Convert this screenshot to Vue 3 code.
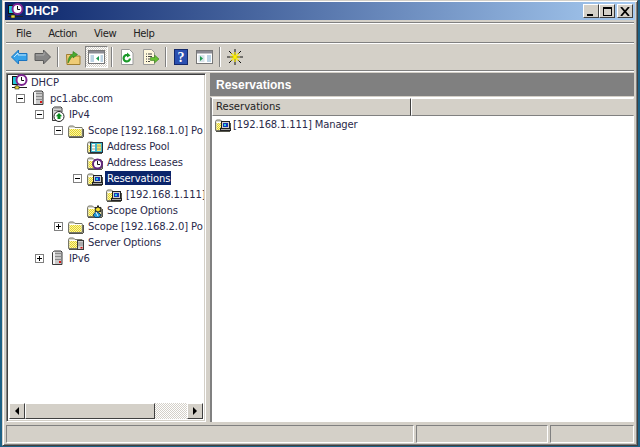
<script setup>
const rows = [
  { d: -1, icon: 'dhcp', label: 'DHCP' },
  { d: 0, exp: '-', icon: 'server', label: 'pc1.abc.com' },
  { d: 1, exp: '-', icon: 'ipv4', label: 'IPv4' },
  { d: 2, exp: '-', icon: 'folder', label: 'Scope [192.168.1.0] Po' },
  { d: 3, icon: 'pool', label: 'Address Pool' },
  { d: 3, icon: 'leases', label: 'Address Leases' },
  { d: 3, exp: '-', icon: 'res', label: 'Reservations', selected: true },
  { d: 4, icon: 'res', label: '[192.168.1.111]' },
  { d: 3, icon: 'options', label: 'Scope Options' },
  { d: 2, exp: '+', icon: 'folder', label: 'Scope [192.168.2.0] Po' },
  { d: 2, icon: 'srvopt', label: 'Server Options' },
  { d: 1, exp: '+', icon: 'server', label: 'IPv6' }
]
const indent = (d) => (d < 0 ? 2 : 7 + 19 * d) + 'px'
const menus = ['File', 'Action', 'View', 'Help']
</script>

<template>
  <div class="desktop">
    <svg class="defs" width="0" height="0" aria-hidden="true">
      <defs>
        <pattern id="dither" width="2" height="2" patternUnits="userSpaceOnUse">
          <rect width="2" height="2" fill="#fff8a0" />
          <rect width="1" height="1" fill="#e0d030" />
          <rect x="1" y="1" width="1" height="1" fill="#e0d030" />
        </pattern>
        <symbol id="folderBase" viewBox="0 0 18 16">
          <path d="M.5 14.500V5.500l1-1.500h4l1.500 1.500h7l.5 1v8z" fill="#d8d8cc" stroke="#77776a" />
          <rect x="1.500" y="7" width="12" height="7" fill="url(#dither)" />
          <path d="M1.500 6.500h12" stroke="#fff" />
          <path d="M1 15.500h14M15.500 7v8" stroke="#55554a" />
        </symbol>
        <symbol id="i-folder" viewBox="0 0 18 16">
          <use href="#folderBase" width="18" height="16" />
        </symbol>
        <symbol id="i-server" viewBox="0 0 18 16">
          <path d="M3.500 14.500v-12l2-1.500h6.500l1 1v12.500z" fill="#c8c8c8" stroke="#3a3a3a" />
          <path d="M4 3.500h8.500M4 6.500h8.500M4 9.500h8.500" stroke="#8a8a8a" />
          <path d="M5 2v12" stroke="#f4f4f4" stroke-width="2" />
          <rect x="10" y="11" width="2" height="2" fill="#d81818" />
        </symbol>
        <symbol id="i-ipv4" viewBox="0 0 18 16">
          <path d="M3.500 14.500v-12l2-1.500h6.500l1 1v4" fill="#d4d4d4" stroke="#3a3a3a" />
          <path d="M5 2h7M5 4.500h7" stroke="#8a8a8a" />
          <path d="M3.500 6v8.500h5" fill="none" stroke="#3a3a3a" />
          <circle cx="10" cy="10.500" r="5" fill="#fff" stroke="#222" />
          <path d="M10 7l3.200 3.200H11.500V13h-3v-2.800H6.800z" fill="#0a8a1e" />
        </symbol>
        <symbol id="i-pool" viewBox="0 0 18 16">
          <use href="#folderBase" width="18" height="16" />
          <rect x="3.500" y="4.500" width="12" height="10" fill="#42b8cc" stroke="#24303c" />
          <rect x="5" y="6" width="3" height="7" fill="#fff" />
          <rect x="10" y="6" width="4" height="7" fill="#f3e568" />
          <path d="M5 8h3M5 11h3M10 8h4M10 11h4" stroke="#a0a080" />
        </symbol>
        <symbol id="i-leases" viewBox="0 0 18 16">
          <use href="#folderBase" width="18" height="16" />
          <circle cx="10.500" cy="10" r="4.500" fill="#fff" stroke="#62287e" stroke-width="2" />
          <path d="M10.500 7v3.500h2.500" fill="none" stroke="#111" />
        </symbol>
        <symbol id="i-res" viewBox="0 0 18 16">
          <use href="#folderBase" width="18" height="16" />
          <rect x="6.500" y="5.500" width="8" height="7" fill="#d0d0d0" stroke="#222" />
          <rect x="8" y="7" width="5" height="4" fill="#1438b8" />
          <rect x="9" y="8" width="2" height="2" fill="#28d0e0" />
          <rect x="5.500" y="12.500" width="10" height="2" fill="#a8a8a8" stroke="#222" />
        </symbol>
        <symbol id="i-options" viewBox="0 0 18 16">
          <use href="#folderBase" width="18" height="16" />
          <path d="M11 3.500v5M8 5.500l6 4M14 5.500l-6 4" stroke="#222" stroke-width="2" />
          <circle cx="11" cy="7.500" r="2.500" fill="#f2df30" stroke="#222" />
          <path d="M6 13l3-3.500 3 1.500 2 2-2 2.500H8z" fill="#1e98d8" stroke="#123c60" />
          <path d="M9 10l2 4" stroke="#fff" />
        </symbol>
        <symbol id="i-srvopt" viewBox="0 0 18 16">
          <use href="#folderBase" width="18" height="16" />
          <rect x="9.500" y="6.500" width="6" height="9" fill="#cfcfcf" stroke="#3a3a3a" />
          <path d="M10 9h5M10 11h5" stroke="#8a8a8a" />
          <rect x="12.500" y="13" width="2" height="1.500" fill="#d81818" />
        </symbol>
        <symbol id="i-dhcp" viewBox="0 0 18 16">
          <rect x="1.500" y="2.500" width="9" height="8" fill="#22c8d8" stroke="#111" />
          <path d="M1 13.500h15" stroke="#222" />
          <path d="M6 10.500v3" stroke="#222" />
          <rect x="4" y="12" width="4" height="3" fill="#e8d838" stroke="#222" stroke-width=".6" />
          <circle cx="10.500" cy="6" r="5" fill="#fff" stroke="#7c2490" stroke-width="2" />
          <path d="M10.500 3v3.500H13" fill="none" stroke="#111" />
        </symbol>
      </defs>
    </svg>

    <div class="window">
      <header class="titlebar">
        <svg class="title-icon" width="18" height="16"><use href="#i-dhcp" width="18" height="16" /></svg>
        <span class="title-text">DHCP</span>
        <div class="win-buttons">
          <button class="win-btn"><span class="glyph-min"></span></button>
          <button class="win-btn"><span class="glyph-max"></span></button>
          <button class="win-btn close">
            <svg width="10" height="9" viewBox="0 0 10 9"><path d="M1 0l8 9M9 0l-8 9" stroke="#000" stroke-width="1.800" /></svg>
          </button>
        </div>
      </header>

      <nav class="menubar">
        <span v-for="m in menus" :key="m" class="menu-item">{{ m }}</span>
      </nav>

      <div class="toolbar">
        <button class="tool">
          <svg width="18" height="16" viewBox="0 0 18 16"><path d="M.5 8l7-7v3.500h8.500v7H7.500V15z" fill="#36a2ea" stroke="#1a74c0" /><path d="M3 8l4-4v2h8" fill="none" stroke="#c4e8fc" /></svg>
        </button>
        <button class="tool">
          <svg width="18" height="16" viewBox="0 0 18 16"><path d="M16.500 8l-7-7v3.500H1v7h8.500V15z" fill="#868686" stroke="#5c5c5c" /><path d="M2 6h8V3" fill="none" stroke="#aaa" /></svg>
        </button>
        <i class="tool-sep"></i>
        <button class="tool">
          <svg width="18" height="16" viewBox="0 0 18 16"><path d="M1.500 5.500h5l1 1.500h7.500v8.500H2z" fill="#efcb74" stroke="#a07e30" /><path d="M3 14c0-5 2-8 5-9V2.500l4.500 3L8 9V7c-2 1-3 4-5 7z" fill="#4aac30" stroke="#2c7a1a" stroke-width=".6" /></svg>
        </button>
        <button class="tool active">
          <svg width="18" height="16" viewBox="0 0 18 16"><rect x=".5" y="1.500" width="16" height="13" fill="#fff" stroke="#777" /><rect x="1" y="2" width="15" height="2.500" fill="#8a8a92" /><rect x="2.500" y="6" width="3.500" height="7" fill="#bcd4e4" /><path d="M11 7v5L8 9.500z" fill="#1c9a50" /><rect x="12.500" y="6" width="2.500" height="7" fill="#bcd4e4" /></svg>
        </button>
        <i class="tool-sep"></i>
        <button class="tool">
          <svg width="18" height="16" viewBox="0 0 18 16"><path d="M2.500 .5h8l3.500 3.500v11.500H2.500z" fill="#fff" stroke="#999" /><path d="M11 9.500A3.200 3.200 0 1 1 9.500 6.500" fill="none" stroke="#1c9a2a" stroke-width="2.200" /><path d="M8 3.500l3.500 3-3.500 2z" fill="#1c9a2a" /></svg>
        </button>
        <button class="tool">
          <svg width="18" height="16" viewBox="0 0 18 16"><path d="M1.500 .5h8l3 3v12h-11z" fill="#fff8dc" stroke="#999" /><path d="M4 5h1M6 5h4M4 7.500h1M6 7.500h4M4 10h1M6 10h2M4 12.500h1M6 12.500h2" stroke="#444" /><path d="M8.500 8.500h4V6l4.500 4-4.500 4v-2.500h-4z" fill="#66c032" stroke="#3a7a20" stroke-width=".6" /></svg>
        </button>
        <i class="tool-sep"></i>
        <button class="tool">
          <svg width="18" height="16" viewBox="0 0 18 16"><rect x="1.500" y=".5" width="13" height="15" fill="#2a4fb0" stroke="#14286a" /><text x="8" y="13" class="q">?</text></svg>
        </button>
        <button class="tool">
          <svg width="18" height="16" viewBox="0 0 18 16"><rect x=".5" y="1.500" width="16" height="13" fill="#fff" stroke="#777" /><rect x="1" y="2" width="15" height="2.500" fill="#8a8a92" /><rect x="2.500" y="6" width="6" height="7" fill="#d8e4ea" /><path d="M4 7v5l3-2.500z" fill="#1c9a50" /><rect x="11" y="6" width="4" height="7" fill="#bcd4e4" /></svg>
        </button>
        <i class="tool-sep"></i>
        <button class="tool">
          <svg width="18" height="16" viewBox="0 0 18 16"><path d="M8 0v16M0 8h16M2 2l12 12M14 2L2 14" stroke="#111" stroke-width="1" /><path d="M8 3v10M3 8h10M4.500 4.500l7 7M11.500 4.500l-7 7" stroke="#fff000" stroke-width="1.200" /></svg>
        </button>
      </div>

      <main class="panes">
        <aside class="tree-pane">
          <div class="tree">
            <div v-for="(r, i) in rows" :key="i" class="tree-row" :style="{ paddingLeft: indent(r.d) }">
              <template v-if="r.d >= 0">
                <span v-if="r.exp" class="expander">
                  <span class="h"></span>
                  <span v-if="r.exp === '+'" class="v"></span>
                </span>
                <span v-else class="expander-slot"></span>
              </template>
              <svg class="node-icon" width="18" height="16"><use :href="'#i-' + r.icon" width="18" height="16" /></svg>
              <span class="node-label" :class="{ selected: r.selected }">{{ r.label }}</span>
            </div>
          </div>
          <div class="hscroll">
            <button class="sb-btn"><span class="tri-left"></span></button>
            <div class="sb-thumb"></div>
            <div class="sb-track"></div>
            <button class="sb-btn"><span class="tri-right"></span></button>
          </div>
        </aside>

        <section class="detail-pane">
          <div class="detail-title">Reservations</div>
          <div class="list">
            <div class="list-head">
              <div class="col first">Reservations</div>
              <div class="col rest"></div>
            </div>
            <div class="list-row">
              <svg class="node-icon" width="18" height="16"><use href="#i-res" width="18" height="16" /></svg>
              <span class="list-label">[192.168.1.111] Manager</span>
            </div>
          </div>
        </section>
      </main>

      <footer class="statusbar">
        <div class="cell grow"></div>
        <div class="cell mid"></div>
        <div class="cell end"></div>
      </footer>
    </div>
  </div>
</template>

<style>
html, body { margin: 0; }
</style>

<style scoped>
.desktop {
  width: 640px;
  height: 447px;
  background: #1d6186;
  overflow: hidden;
  box-sizing: border-box;
  padding: 0 2px 1px;
  font: 10px "DejaVu Sans", Verdana, sans-serif;
  color: #000;
}
.defs { position: absolute; }
.window {
  height: 100%;
  box-sizing: border-box;
  background: #d4d0c8;
  border: 1px solid #d4d0c8;
  border-right-color: #404040;
  border-bottom-color: #404040;
  box-shadow: inset 1px 1px 0 #fff, inset -1px -1px 0 #808080;
  padding: 1px 3px 2px;
  display: flex;
  flex-direction: column;
}
.titlebar {
  height: 18px;
  margin: 0 -1px;
  display: flex;
  align-items: center;
  background: linear-gradient(90deg, #0a246a, #a6caf0);
  color: #fff;
  flex: none;
}
.title-icon { margin-left: 2px; }
.title-text { font: 700 12px "Liberation Sans", Arial, sans-serif; margin-left: 0; letter-spacing: -.2px; }
.win-buttons { margin-left: auto; display: flex; margin-right: 2px; }
.win-btn {
  width: 16px;
  height: 14px;
  padding: 0;
  background: #d4d0c8;
  border: 1px solid;
  border-color: #fff #404040 #404040 #fff;
  display: flex;
  align-items: center;
  justify-content: center;
}
.win-btn.close { margin-left: 2px; }
.glyph-min { width: 6px; height: 2px; background: #000; margin-top: 7px; margin-right: 2px; }
.glyph-max { width: 7px; height: 6px; border: 1px solid #000; border-top-width: 2px; }
.menubar {
  flex: none;
  height: 21px;
  margin-top: 2px;
  border-top: 1px solid #808080;
  box-shadow: inset 0 1px 0 #fff;
  border-bottom: 1px solid #808080;
  display: flex;
  align-items: center;
  padding: 2px 0 0 10px;
  box-sizing: border-box;
  gap: 17px;
}
.menu-item { color: #222; letter-spacing: -.4px; }
.toolbar {
  flex: none;
  height: 28px;
  border-top: 1px solid #fff;
  border-bottom: 1px solid #808080;
  box-shadow: 0 1px 0 #fff;
  box-sizing: border-box;
  display: flex;
  align-items: center;
  padding-left: 2px;
}
.tool {
  width: 23px;
  height: 22px;
  padding: 0;
  background: none;
  border: 1px solid transparent;
  display: flex;
  align-items: center;
  justify-content: center;
}
.tool.active {
  border-color: #808080 #fff #fff #808080;
  background: conic-gradient(#fff 25%, #d4d0c8 0 50%, #fff 0 75%, #d4d0c8 0) 0 0 / 2px 2px;
}
.tool-sep {
  width: 0;
  height: 20px;
  margin: 0 3px;
  border-left: 1px solid #808080;
  border-right: 1px solid #fff;
}
.q { font: 700 14px "Liberation Serif", serif; fill: #fff; text-anchor: middle; }
.panes {
  flex: 1;
  min-height: 0;
  display: flex;
  gap: 4px;
  margin-top: 2px;
}
.tree-pane {
  width: 200px;
  flex: none;
  box-sizing: border-box;
  background: #fff;
  border: 1px solid;
  border-color: #808080 #fff #fff #808080;
  box-shadow: inset 1px 1px 0 #404040, inset -1px -1px 0 #d4d0c8;
  padding: 0 1px 2px 2px;
  display: flex;
  flex-direction: column;
}
.tree { flex: 1; min-height: 0; overflow: hidden; }
.tree-row {
  height: 16px;
  display: flex;
  align-items: center;
  white-space: nowrap;
}
.expander {
  width: 9px;
  height: 9px;
  box-sizing: border-box;
  border: 1px solid #808080;
  margin-right: 5px;
  position: relative;
  flex: none;
  background: #fff;
}
.expander .h { position: absolute; left: 1px; top: 3px; width: 5px; height: 1px; background: #000; }
.expander .v { position: absolute; left: 3px; top: 1px; width: 1px; height: 5px; background: #000; }
.expander-slot { width: 14px; flex: none; }
.node-icon { flex: none; }
.node-label { padding: 2px 1px 1px 2px; color: #2a2a4a; letter-spacing: -.1px; }
.node-label.selected { background: #0a246a; color: #fff; }
.hscroll { flex: none; height: 16px; display: flex; margin-right: 1px; }
.sb-btn {
  width: 16px;
  height: 16px;
  padding: 0;
  background: #d4d0c8;
  border: 1px solid;
  border-color: #fff #404040 #404040 #fff;
  display: flex;
  align-items: center;
  justify-content: center;
  flex: none;
}
.sb-thumb {
  width: 130px;
  flex: none;
  box-sizing: border-box;
  background: #d4d0c8;
  border: 1px solid;
  border-color: #fff #404040 #404040 #fff;
}
.sb-track {
  flex: 1;
  background: conic-gradient(#fff 25%, #d4d0c8 0 50%, #fff 0 75%, #d4d0c8 0) 0 0 / 2px 2px;
}
.tri-left { width: 0; height: 0; border: 4px solid transparent; border-left: 0; border-right: 4px solid #000; }
.tri-right { width: 0; height: 0; border: 4px solid transparent; border-right: 0; border-left: 4px solid #000; }
.detail-pane {
  flex: 1;
  min-width: 0;
  display: flex;
  flex-direction: column;
  background: #fff;
}
.detail-title {
  flex: none;
  height: 24px;
  background: #808080;
  color: #fff;
  font: 700 12px/24px "Liberation Sans", Arial, sans-serif;
  padding-left: 6px;
  border-bottom: 1px solid #d4d0c8;
  box-sizing: border-box;
}
.list { flex: 1; border-left: 2px solid #808080; border-top: 1px solid #fff; }
.list-head { display: flex; height: 18px; }
.col {
  box-sizing: border-box;
  background: #d4d0c8;
  border: 1px solid;
  border-color: #fff #404040 #808080 #fff;
  color: #222;
  padding-left: 3px;
  line-height: 16px;
}
.col.first { width: 199px; flex: none; }
.col.rest { flex: 1; border-right-color: #d4d0c8; }
.list-row {
  display: flex;
  align-items: center;
  height: 16px;
  padding-left: 3px;
}
.list-label { color: #2a2a4a; letter-spacing: -.15px; }
.statusbar {
  flex: none;
  height: 18px;
  margin-top: 3px;
  display: flex;
  gap: 2px;
}
.cell {
  box-sizing: border-box;
  border: 1px solid;
  border-color: #808080 #fff #fff #808080;
}
.cell.grow { flex: 1; }
.cell.mid { width: 132px; }
.cell.end { width: 84px; }
</style>
